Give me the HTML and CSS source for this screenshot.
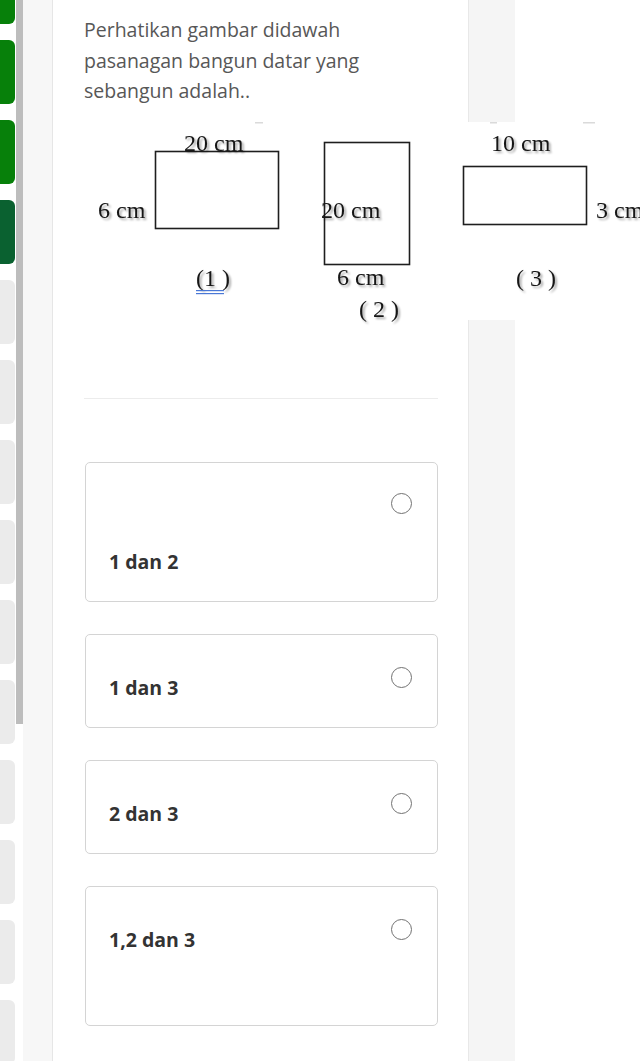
FILE: index.html
```html
<!DOCTYPE html>
<html lang="id">
<head>
<meta charset="utf-8">
<title>Soal</title>
<link rel="stylesheet" href="styles.css">
</head>
<body>
<div class="rail">
  <div class="tile tile--done"></div>
  <div class="tile tile--done"></div>
  <div class="tile tile--done"></div>
  <div class="tile tile--current"></div>
  <div class="tile"></div>
  <div class="tile"></div>
  <div class="tile"></div>
  <div class="tile"></div>
  <div class="tile"></div>
  <div class="tile"></div>
  <div class="tile"></div>
  <div class="tile"></div>
  <div class="tile"></div>
  <div class="tile"></div>
</div>
<div class="scroll"><div class="thumb"></div></div>
<div class="gutter"></div>
<main class="main">
  <p class="question">Perhatikan gambar didawah pasanagan bangun datar yang sebangun adalah..</p>
  <div class="figure">
    <svg width="556" height="204" viewBox="0 0 556 204" xmlns="http://www.w3.org/2000/svg">
      <defs>
        <filter id="sh" x="-10%" y="-30%" width="130%" height="170%">
          <feGaussianBlur in="SourceAlpha" stdDeviation="1.2"/>
          <feOffset dx="1.5" dy="1.5" result="b"/>
          <feComponentTransfer><feFuncA type="linear" slope="0.35"/></feComponentTransfer>
          <feMerge><feMergeNode/><feMergeNode in="SourceGraphic"/></feMerge>
        </filter>
      </defs>
      <rect class="smudge" x="171" y="0" width="8" height="1.5"/>
      <rect class="smudge" x="406" y="0" width="7" height="1.5"/>
      <rect class="smudge" x="499" y="0" width="12" height="1.5"/>
      <rect class="shape" x="71.5" y="29.5" width="123" height="77"/>
      <rect class="shape" x="240.5" y="20.5" width="85" height="122"/>
      <rect class="shape" x="379.5" y="44.5" width="123" height="58"/>
      <g class="lbl">
        <text x="100" y="29">20 cm</text>
        <text x="14" y="96">6 cm</text>
        <text x="112" y="164">(1 )</text>
        <text x="237" y="96">20 cm</text>
        <text x="253" y="163">6 cm</text>
        <text x="275" y="195">( 2 )</text>
        <text x="407" y="29">10 cm</text>
        <text x="512" y="96">3 cm</text>
        <text x="432" y="164">( 3 )</text>
      </g>
      <rect class="squiggle" x="112" y="168" width="28" height="1.2"/>
      <rect class="squiggle" x="112" y="171" width="28" height="1.2"/>
    </svg>
  </div>
  <hr class="divider">
  <div class="options">
    <div class="option option--low"><span class="label">1 dan 2</span><span class="radio"></span></div>
    <div class="option"><span class="label">1 dan 3</span><span class="radio"></span></div>
    <div class="option"><span class="label">2 dan 3</span><span class="radio"></span></div>
    <div class="option option--tall"><span class="label">1,2 dan 3</span><span class="radio"></span></div>
  </div>
</main>
<div class="aside"></div>
</body>
</html>
```
FILE: styles.css
```css
html, body {
  margin: 0;
  padding: 0;
}
body {
  display: flex;
  align-items: stretch;
  height: 1061px;
  overflow: hidden;
  background: #fff;
  font-family: "Open Sans", "Liberation Sans", sans-serif;
}
.rail {
  width: 16px;
  flex: none;
  display: flex;
  flex-direction: column;
  gap: 16px;
  margin-top: -40px;
}
.tile {
  width: 15px;
  height: 64px;
  flex: none;
  background: #ebebeb;
  border-radius: 0 6px 6px 0;
}
.tile--done {
  background: #07800a;
}
.tile--current {
  background: #0a6130;
}
.scroll {
  width: 7px;
  flex: none;
  background: #fff;
}
.thumb {
  height: 724px;
  background: #bdbdbd;
}
.gutter {
  width: 29px;
  flex: none;
  background: #f7f7f7;
  border-right: 1px solid #e6e6e6;
}
.main {
  width: 354px;
  flex: none;
  padding: 15px 30px 0 31px;
  background: #fff;
}
.question {
  margin: 0;
  font-size: 19.5px;
  line-height: 30.5px;
  color: #575757;
}
.figure {
  position: relative;
  z-index: 1;
  width: 556px;
  height: 198px;
  margin-top: 15px;
  background: #fff;
}
.figure svg {
  display: block;
  overflow: visible;
}
.shape {
  fill: #fff;
  stroke: #1e1e1e;
  stroke-width: 1.6;
}
.smudge {
  fill: #dadada;
}
.squiggle {
  fill: #4a78d6;
}
.lbl {
  font-family: "Liberation Serif", "Times New Roman", serif;
  font-size: 24px;
  fill: #151515;
  filter: url(#sh);
}
.divider {
  margin: 78px 0 0;
  border: 0;
  border-top: 1px solid #ececec;
  height: 0;
}
.options {
  margin-top: 63px;
  display: flex;
  flex-direction: column;
  gap: 32px;
  padding-left: 1px;
}
.option {
  position: relative;
  border: 1px solid #d4d4d4;
  border-radius: 5px;
  padding: 41px 23px 27px;
  background: #fff;
}
.option--low {
  padding-top: 87px;
}
.option--tall {
  padding-bottom: 73px;
}
.label {
  display: block;
  font-size: 19.5px;
  line-height: 24px;
  font-weight: 700;
  color: #333;
}
.radio {
  position: absolute;
  top: 32px;
  right: 25px;
  width: 19px;
  height: 19px;
  border: 1.5px solid #727272;
  border-radius: 50%;
}
.option--low .radio {
  top: 30px;
}
.aside {
  width: 46px;
  flex: none;
  background: #f5f5f5;
  border-left: 1px solid #e8e8e8;
}
```
